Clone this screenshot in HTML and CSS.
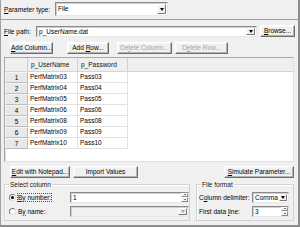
FILE: index.html
```html
<!DOCTYPE html>
<html>
<head>
<meta charset="utf-8">
<link rel="stylesheet" href="styles.css">
</head>
<body>
<div class="win">
  <div class="top">
    <span class="lbl ptlbl"><u>P</u>arameter type:</span>
    <div class="combo ptype"><span class="val">File</span><span class="ddb"><i class="tri"></i></span></div>
  </div>
  <div class="panel">
    <div class="pathrow">
      <span class="lbl pathlbl"><u>F</u>ile path:</span>
      <div class="combo path"><span class="val">p_UserName.dat</span><span class="ddb"><i class="tri"></i></span></div>
      <div class="btn browse"><u>B</u>rowse...</div>
    </div>
    <div class="btnrow">
      <div class="btn b-addcol"><u>A</u>dd Column...</div>
      <div class="btn b-addrow">Add <u>R</u>ow...</div>
      <div class="btn dis b-delcol">De<u>l</u>ete Column...</div>
      <div class="btn dis b-delrow">D<u>e</u>lete Row...</div>
    </div>
    <div class="grid">
      <div class="ghead"><div class="rh"></div><div class="c">p_UserName</div><div class="c">p_Password</div></div>
      <div class="grow"><div class="rh">1</div><div class="c">PerfMatrix03</div><div class="c">Pass03</div></div>
      <div class="grow"><div class="rh">2</div><div class="c">PerfMatrix04</div><div class="c">Pass04</div></div>
      <div class="grow"><div class="rh">3</div><div class="c">PerfMatrix05</div><div class="c">Pass05</div></div>
      <div class="grow"><div class="rh">4</div><div class="c">PerfMatrix06</div><div class="c">Pass06</div></div>
      <div class="grow"><div class="rh">5</div><div class="c">PerfMatrix08</div><div class="c">Pass08</div></div>
      <div class="grow"><div class="rh">6</div><div class="c">PerfMatrix09</div><div class="c">Pass09</div></div>
      <div class="grow"><div class="rh">7</div><div class="c">PerfMatrix10</div><div class="c">Pass10</div></div>
    </div>
    <div class="btnrow2">
      <div class="btn b-edit"><u>E</u>dit with Notepad...</div>
      <div class="btn b-import">Import Values</div>
      <div class="btn b-sim"><u>S</u>imulate Parameter...</div>
    </div>
    <div class="groups">
      <fieldset class="group g-sel">
        <legend>Select column</legend>
        <div class="frow">
          <span class="radio on"><i></i></span>
          <span class="rlbl"><span class="focus"><u>B</u>y number:</span></span>
          <div class="field spin wide"><span class="val">1</span><span class="spb"><i class="up"></i><i class="dn"></i></span></div>
        </div>
        <div class="frow">
          <span class="radio"></span>
          <span class="rlbl">B<u>y</u> name:</span>
          <div class="field wide disabled"><span class="val"></span><span class="ddb dis"><i class="tri"></i></span></div>
        </div>
      </fieldset>
      <fieldset class="group g-fmt">
        <legend>File format</legend>
        <div class="frow">
          <span class="flbl">C<u>o</u>lumn delimiter:</span>
          <div class="field narrow"><span class="val">Comma</span><span class="ddb"><i class="tri"></i></span></div>
        </div>
        <div class="frow">
          <span class="flbl">First data <u>l</u>ine:</span>
          <div class="field narrow spin"><span class="val">3</span><span class="spb"><i class="up"></i><i class="dn"></i></span></div>
        </div>
      </fieldset>
    </div>
  </div>
</div>
</body>
</html>
```

FILE: styles.css
```css
* { box-sizing: border-box; }
body {
  margin: 0;
  background: #f0f0f0;
  font-family: "Liberation Sans", Arial, sans-serif;
  font-size: 6.5px;
  color: #000;
}
u { text-decoration: underline; text-underline-offset: 1px; }

.win {
  width: 300px;
  height: 227px;
  background: #f0f0f0;
  border-left: 1px solid #a0a0a0;
  border-right: 2px solid #8c8c8c;
  border-bottom: 2px solid #8c8c8c;
  display: flex;
  flex-direction: column;
}

.top {
  height: 20px;
  display: flex;
  align-items: center;
  padding-left: 3px;
  border-bottom: 1px solid #a0a0a0;
  padding-bottom: 1px;
}
.lbl { white-space: nowrap; }
.ptlbl { width: 51px; }

.combo, .field {
  display: flex;
  align-items: stretch;
  background: #fff;
  border: 1px solid;
  border-color: #8a8a8a #e8e8e8 #e8e8e8 #8a8a8a;
  box-shadow: inset 1px 1px 0 #cfcfcf;
}
.combo .val, .field .val {
  flex: 1;
  padding-left: 2px;
  line-height: 10px;
  white-space: nowrap;
}
.ptype { width: 113px; height: 14px; }
.ptype .val { line-height: 12px; }

.ddb {
  width: 9px;
  margin: 1px;
  background: #f0f0f0;
  border: 1px solid;
  border-color: #fff #7a7a7a #7a7a7a #fff;
  display: flex;
  align-items: center;
  justify-content: center;
}
.tri {
  display: block;
  width: 0;
  height: 0;
  border-left: 2.5px solid transparent;
  border-right: 2.5px solid transparent;
  border-top: 3px solid #000;
}
.ddb.dis .tri { border-top-color: #a8a8a8; }

.panel {
  flex: 1;
  display: flex;
  flex-direction: column;
  padding: 0 3px 0 3px;
}

.pathrow {
  margin-top: 5px;
  height: 12px;
  display: flex;
  align-items: center;
}
.pathlbl { width: 32px; }
.path { width: 221px; height: 11px; }

.btn {
  height: 12px;
  background: #f0f0f0;
  border: 1px solid;
  border-color: #fff #6e6e6e #6e6e6e #fff;
  box-shadow: inset -1px -1px 0 #b4b4b4, inset 1px 1px 0 #f8f8f8;
  text-align: center;
  line-height: 10px;
  white-space: nowrap;
}
.btn.dis { color: #a3a3a3; }
.browse { width: 35px; margin-left: 3px; height: 12px; }

.btnrow {
  margin-top: 5px;
  height: 12px;
  display: flex;
}
.b-addcol { width: 43px; margin-left: 6px; }
.b-addrow { width: 42px; margin-left: 14px; }
.b-delcol { width: 55px; margin-left: 8px; }
.b-delrow { width: 53px; margin-left: 3px; }

.grid {
  margin-top: 3px;
  height: 105px;
  width: 290px;
  background: #fff;
  border-top: 1px solid #a8a8a8;
  border-left: 1px solid #a8a8a8;
  border-right: 1px solid #e0e0e0;
  border-bottom: 1px solid #e0e0e0;
  box-shadow: inset 1px 1px 0 #dcdcdc;
}
.ghead {
  display: flex;
  height: 14px;
  background: #efefef;
  border-bottom: 1px solid #d4d4d4;
}
.ghead .rh { width: 23px; border-right: 1px solid #d0d0d0; }
.ghead .c {
  width: 50px;
  padding-left: 3px;
  line-height: 13px;
  border-right: 1px solid #d0d0d0;
  color: #111;
}
.grow { display: flex; height: 11px; }
.grow .rh {
  width: 23px;
  background: #e8e8e8;
  border: 1px solid;
  border-color: #f6f6f6 #bdbdbd #bdbdbd #f6f6f6;
  text-align: center;
  line-height: 9px;
}
.grow .c {
  width: 50px;
  padding-left: 2px;
  line-height: 10px;
  border-right: 1px solid #e2e2e2;
  border-bottom: 1px solid #e2e2e2;
}

.btnrow2 {
  margin-top: 4px;
  height: 12px;
  display: flex;
}
.b-edit { width: 60px; margin-left: 6px; }
.b-import { width: 65px; margin-left: 3px; }
.b-sim { width: 70px; margin-left: auto; margin-right: 1px; }

.groups {
  margin-top: 3px;
  display: flex;
  gap: 6px;
}
.group {
  margin: 0;
  padding: 2px 0 0 0;
  border: 1px solid #d2d2d2;
  box-shadow: 1px 1px 0 #fff inset;
  height: 40px;
}
.group legend {
  padding: 0 1px;
  margin-left: 4px;
  line-height: 7px;
  color: #111;
}
.g-sel { width: 186px; }
.g-fmt { width: 98px; }

.frow {
  height: 14px;
  display: flex;
  align-items: center;
}
.radio {
  width: 7px;
  height: 7px;
  border-radius: 50%;
  background: #fff;
  border: 1px solid;
  border-color: #7a7a7a #dcdcdc #dcdcdc #7a7a7a;
  margin-left: 4px;
  display: flex;
  align-items: center;
  justify-content: center;
}
.radio i {
  display: block;
  width: 3px;
  height: 3px;
  border-radius: 50%;
  background: #000;
}
.rlbl { width: 54px; padding-left: 2px; }
.focus { outline: 1px dotted #555; outline-offset: 0; }
.field { height: 11px; }
.wide { width: 119px; }
.disabled { background: #f0f0f0; }
.flbl { width: 55px; padding-left: 2px; }
.narrow { width: 37px; }

.spb {
  width: 7px;
  display: flex;
  flex-direction: column;
  margin: 0;
}
.spb i {
  flex: 1;
  display: flex;
  align-items: center;
  justify-content: center;
  background: #f0f0f0;
  border: 1px solid;
  border-color: #fff #8a8a8a #8a8a8a #fff;
  position: relative;
}
.spb .up::after, .spb .dn::after {
  content: "";
  display: block;
  border-left: 1.5px solid transparent;
  border-right: 1.5px solid transparent;
}
.spb .up::after { border-bottom: 1.5px solid #000; }
.spb .dn::after { border-top: 1.5px solid #000; }
```
